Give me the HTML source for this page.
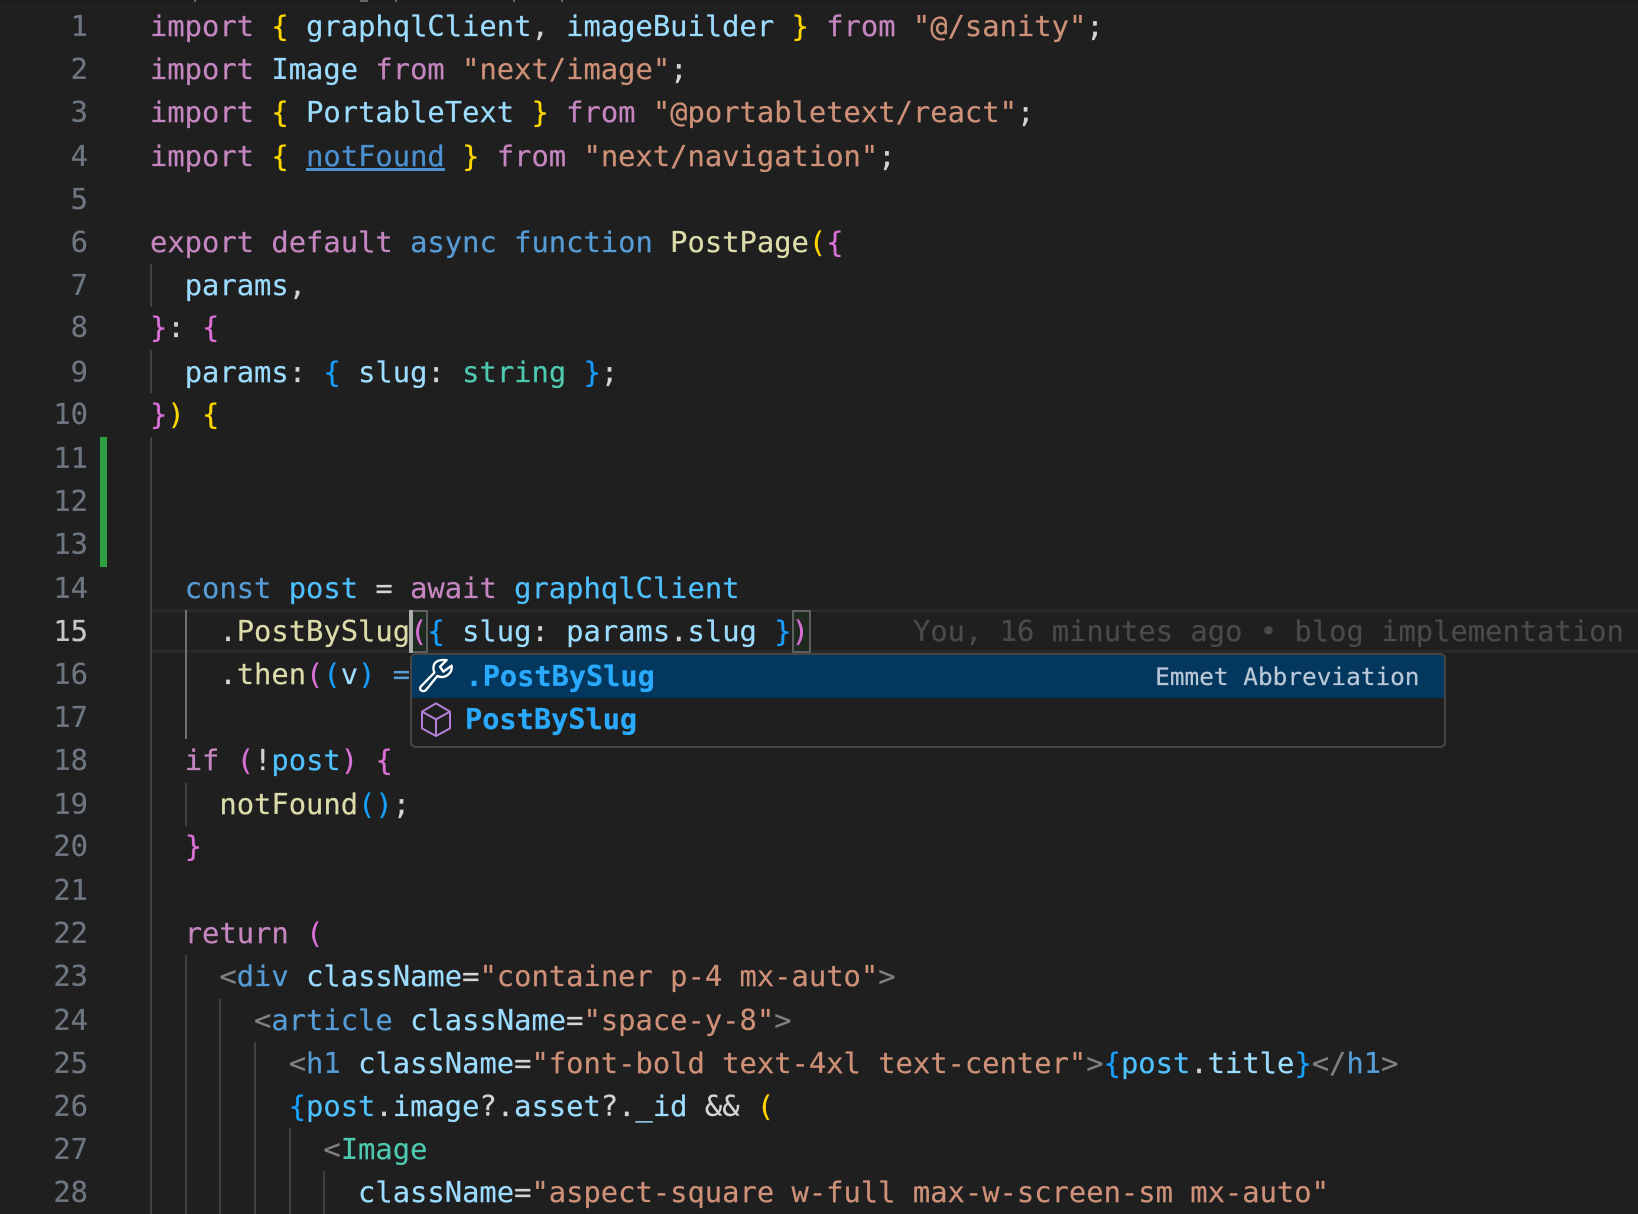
<!DOCTYPE html>
<html>
<head>
<meta charset="utf-8">
<style>
html,body{margin:0;padding:0;background:#1f1f1f;width:1638px;height:1214px;overflow:hidden}
#e{position:relative;width:1638px;height:1214px;overflow:hidden;background:#1f1f1f;font-family:"DejaVu Sans Mono","Liberation Mono",monospace;font-size:28.8px;color:#d4d4d4;-webkit-text-stroke:0.2px}
.l,.n{position:absolute;line-height:43.18px;height:43.18px;white-space:pre}
.l{left:150px}
.n{left:20px;width:68px;text-align:right;color:#6e7681}
.g{position:absolute;width:2px;background:#404040}
.k{color:#c586c0}.v{color:#9cdcfe}.y{color:#ffd700}.p{color:#da70d6}.b{color:#179fff}.s{color:#ce9178}.d{color:#569cd6}.f{color:#dcdcaa}.t{color:#4ec9b0}.c{color:#4fc1ff}.a{color:#808080}.w{color:#d4d4d4}
.box{position:absolute;border:2px solid #5f5f5f;background:#1e2a20;box-sizing:border-box}
</style>
</head>
<body>
<div id="e">
<div style="position:absolute;left:0;top:0;width:1638px;height:3px;background:#1c1c1c"></div>
<div style="position:absolute;left:194px;top:0;width:2px;height:2px;background:#666"></div>
<div style="position:absolute;left:360px;top:0;width:8px;height:2px;background:#666"></div>
<div style="position:absolute;left:395px;top:0;width:2px;height:2px;background:#666"></div>
<div style="position:absolute;left:513px;top:0;width:2px;height:2px;background:#666"></div>
<div style="position:absolute;left:561px;top:0;width:2px;height:2px;background:#666"></div>

<div style="position:absolute;left:152px;top:609px;width:1486px;height:44px;box-sizing:border-box;border-top:3px solid #282828;border-bottom:3px solid #282828"></div>
<div style="position:absolute;left:100px;top:437px;width:7px;height:130px;background:#2ea043"></div>

<div class="g" style="left:150px;top:264px;height:43px"></div>
<div class="g" style="left:150px;top:350px;height:43px"></div>
<div class="g" style="left:150px;top:437px;height:777px"></div>
<div class="g" style="left:185px;top:610px;height:129px;background:#707070"></div>
<div class="g" style="left:185px;top:783px;height:43px"></div>
<div class="g" style="left:185px;top:955px;height:259px"></div>
<div class="g" style="left:219px;top:999px;height:215px"></div>
<div class="g" style="left:254px;top:1042px;height:172px"></div>
<div class="g" style="left:289px;top:1128px;height:86px"></div>
<div class="g" style="left:323px;top:1171px;height:43px"></div>

<div class="n" style="top:5px">1</div>
<div class="n" style="top:48px">2</div>
<div class="n" style="top:91px">3</div>
<div class="n" style="top:135px">4</div>
<div class="n" style="top:178px">5</div>
<div class="n" style="top:221px">6</div>
<div class="n" style="top:264px">7</div>
<div class="n" style="top:306px">8</div>
<div class="n" style="top:351px">9</div>
<div class="n" style="top:393px">10</div>
<div class="n" style="top:437px">11</div>
<div class="n" style="top:480px">12</div>
<div class="n" style="top:523px">13</div>
<div class="n" style="top:567px">14</div>
<div class="n" style="top:610px;color:#c6c6c6">15</div>
<div class="n" style="top:653px">16</div>
<div class="n" style="top:696px">17</div>
<div class="n" style="top:739px">18</div>
<div class="n" style="top:783px">19</div>
<div class="n" style="top:825px">20</div>
<div class="n" style="top:869px">21</div>
<div class="n" style="top:912px">22</div>
<div class="n" style="top:955px">23</div>
<div class="n" style="top:999px">24</div>
<div class="n" style="top:1042px">25</div>
<div class="n" style="top:1085px">26</div>
<div class="n" style="top:1128px">27</div>
<div class="n" style="top:1171px">28</div>

<div class="l" style="top:5px"><span class="k">import</span> <span class="y">{</span> <span class="v">graphqlClient</span>, <span class="v">imageBuilder</span> <span class="y">}</span> <span class="k">from</span> <span class="s">"@/sanity"</span>;</div>
<div class="l" style="top:48px"><span class="k">import</span> <span class="v">Image</span> <span class="k">from</span> <span class="s">"next/image"</span>;</div>
<div class="l" style="top:91px"><span class="k">import</span> <span class="y">{</span> <span class="v">PortableText</span> <span class="y">}</span> <span class="k">from</span> <span class="s">"@portabletext/react"</span>;</div>
<div class="l" style="top:135px"><span class="k">import</span> <span class="y">{</span> <span style="color:#4b90d0">notFound</span> <span class="y">}</span> <span class="k">from</span> <span class="s">"next/navigation"</span>;</div>
<div style="position:absolute;left:306px;top:168px;width:139px;height:2.5px;background:#4b90d0"></div>
<div class="l" style="top:221px"><span class="k">export</span> <span class="k">default</span> <span class="d">async</span> <span class="d">function</span> <span class="f">PostPage</span><span class="y">(</span><span class="p">{</span></div>
<div class="l" style="top:264px">  <span class="v">params</span>,</div>
<div class="l" style="top:306px"><span class="p">}</span>: <span class="p">{</span></div>
<div class="l" style="top:351px">  <span class="v">params</span>: <span class="b">{</span> <span class="v">slug</span>: <span class="t">string</span> <span class="b">}</span>;</div>
<div class="l" style="top:393px"><span class="p">}</span><span class="y">)</span> <span class="y">{</span></div>
<div class="l" style="top:567px">  <span class="d">const</span> <span class="c">post</span> = <span class="k">await</span> <span class="c">graphqlClient</span></div>
<div class="box" style="left:409px;top:610px;width:19px;height:43px"></div>
<div class="box" style="left:791.5px;top:610px;width:19px;height:43px"></div>
<div style="position:absolute;left:409px;top:610px;width:3.5px;height:43px;background:#aeafad"></div>
<div class="l" style="top:610px">    .<span class="f">PostBySlug</span><span class="p">(</span><span class="b">{</span> <span class="v">slug</span>: <span class="v">params</span>.<span class="v">slug</span> <span class="b">}</span><span class="p">)</span></div>
<div class="l" style="top:610px;left:913px;color:#4a4a4a">You, 16 minutes ago • blog implementation</div>
<div class="l" style="top:653px">    .<span class="f">then</span><span class="p">(</span><span class="b">(</span><span class="v">v</span><span class="b">)</span> <span class="d">=</span></div>
<div class="l" style="top:739px">  <span class="k">if</span> <span class="p">(</span>!<span class="c">post</span><span class="p">)</span> <span class="p">{</span></div>
<div class="l" style="top:783px">    <span class="f">notFound</span><span class="b">()</span>;</div>
<div class="l" style="top:825px">  <span class="p">}</span></div>
<div class="l" style="top:912px">  <span class="k">return</span> <span class="p">(</span></div>
<div class="l" style="top:955px">    <span class="a">&lt;</span><span class="d">div</span> <span class="v">className</span>=<span class="s">"container p-4 mx-auto"</span><span class="a">&gt;</span></div>
<div class="l" style="top:999px">      <span class="a">&lt;</span><span class="d">article</span> <span class="v">className</span>=<span class="s">"space-y-8"</span><span class="a">&gt;</span></div>
<div class="l" style="top:1042px">        <span class="a">&lt;</span><span class="d">h1</span> <span class="v">className</span>=<span class="s">"font-bold text-4xl text-center"</span><span class="a">&gt;</span><span class="b">{</span><span class="c">post</span>.<span class="v">title</span><span class="b">}</span><span class="a">&lt;/</span><span class="d">h1</span><span class="a">&gt;</span></div>
<div class="l" style="top:1085px">        <span class="b">{</span><span class="c">post</span>.<span class="v">image</span>?.<span class="v">asset</span>?.<span class="v">_id</span> &amp;&amp; <span class="y">(</span></div>
<div class="l" style="top:1128px">          <span class="a">&lt;</span><span class="t">Image</span></div>
<div class="l" style="top:1171px">            <span class="v">className</span>=<span class="s">"aspect-square w-full max-w-screen-sm mx-auto"</span></div>

<div style="position:absolute;left:410px;top:653px;width:1035.5px;height:94.5px;box-sizing:border-box;background:#1f1f1f;border:2px solid #454545;border-radius:6px;overflow:hidden">
  <div style="position:absolute;left:0;top:0;width:100%;height:43px;background:#03375d"></div>
  <div style="position:absolute;left:53.5px;top:0;line-height:43px;font-weight:bold;font-size:28.6px;color:#2aaaff;white-space:pre">.PostBySlug</div>
  <div style="position:absolute;left:53px;top:43px;line-height:43px;font-weight:bold;font-size:28.6px;color:#2aaaff;white-space:pre">PostBySlug</div>
  <div style="position:absolute;right:24px;top:0;line-height:43px;font-size:24.4px;color:#b8c8d8;white-space:pre">Emmet Abbreviation</div>
</div>
<svg style="position:absolute;left:400px;top:640px" width="120" height="110" viewBox="0 0 360 330" fill="none">
  <path d="M62 140 L103 98 C95 75 105 62 125 60 L140 60 L120 80 L130 95 L155 77 C158 100 135 118 112 108 L78 150 C70 158 55 150 62 140 Z" stroke="#ffffff" stroke-width="7" stroke-linejoin="round"/>
  <path d="M108 190 L150 215 L150 265 L108 288 L66 265 L66 215 Z M66 215 L108 238 L150 215 M108 238 L108 288" stroke="#b180d7" stroke-width="6" stroke-linejoin="round"/>
</svg>
</div>
</body>
</html>
